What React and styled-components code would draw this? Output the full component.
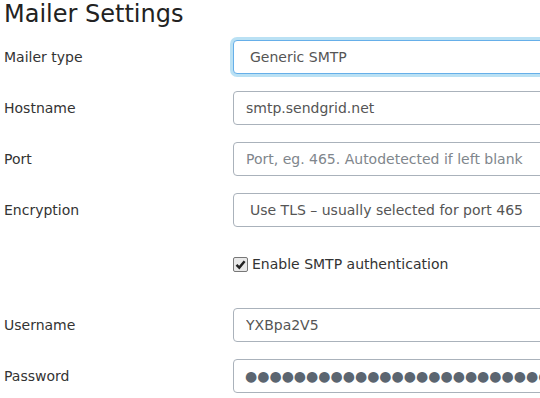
import React from "react";
import styled, { createGlobalStyle } from "styled-components";

const GlobalStyle = createGlobalStyle`
  html, body {
    margin: 0;
    padding: 0;
    background: #fff;
    overflow: hidden;
  }
  body {
    font-family: "DejaVu Sans", "Liberation Sans", sans-serif;
    color: #333;
  }
`;

const Page = styled.div`
  padding: 0 0 0 4px;
  width: 700px;
`;

const Title = styled.h2`
  margin: 0;
  font-size: 24px;
  font-weight: 400;
  line-height: 28px;
  color: #222;
`;

const Form = styled.div`
  display: flex;
  flex-direction: column;
  gap: 17px;
  margin-top: ${(p) => p.$top || 0}px;
`;

const Row = styled.div`
  display: grid;
  grid-template-columns: 229px 420px;
  align-items: center;
  min-height: 34px;
`;

const Label = styled.label`
  font-size: 14px;
  color: #333;
`;

const Input = styled.input`
  box-sizing: border-box;
  height: 34px;
  width: 100%;
  padding: 6px 12px;
  font-family: inherit;
  font-size: 14px;
  color: #555;
  background: #fff;
  border: 1px solid #aab2bb;
  border-radius: 4px;
  outline: none;

  &::placeholder {
    color: #80868c;
  }
`;

const Secret = styled(Input)`
  color: #5b6570;
  padding-left: 11px;
`;

const Select = styled.select`
  box-sizing: border-box;
  height: 34px;
  width: 100%;
  padding: 6px 12px;
  font-family: inherit;
  font-size: 14px;
  color: #555;
  background: #fff;
  border: 1px solid ${(p) => (p.$focused ? "#66afe9" : "#aab2bb")};
  border-radius: 4px;
  outline: none;
  appearance: none;
  box-shadow: ${(p) =>
    p.$focused ? "0 0 0 3px rgba(130, 200, 235, 0.55)" : "none"};
  text-indent: 4px;
`;

const CheckRow = styled.div`
  display: grid;
  grid-template-columns: 229px auto;
  align-items: center;
  height: 20px;
  margin: 27px 0 34px;
`;

const CheckLabel = styled.label`
  display: flex;
  align-items: center;
  gap: 4px;
  font-size: 14px;
  color: #333;
`;

const Box = styled.span`
  width: 13px;
  height: 13px;
  border: 1px solid #777;
  border-radius: 2px;
  background: #e9e9e9;
  display: inline-flex;
  align-items: center;
  justify-content: center;
`;

export default function App() {
  return (
    <>
      <GlobalStyle />
      <Page>
        <Title>Mailer Settings</Title>
        <Form $top={12}>
          <Row>
            <Label>Mailer type</Label>
            <Select $focused defaultValue="smtp">
              <option value="smtp">Generic SMTP</option>
            </Select>
          </Row>
          <Row>
            <Label>Hostname</Label>
            <Input defaultValue="smtp.sendgrid.net" />
          </Row>
          <Row>
            <Label>Port</Label>
            <Input placeholder="Port, eg. 465. Autodetected if left blank" />
          </Row>
          <Row>
            <Label>Encryption</Label>
            <Select defaultValue="tls">
              <option value="tls">Use TLS – usually selected for port 465</option>
            </Select>
          </Row>
        </Form>
        <CheckRow>
          <span />
          <CheckLabel>
            <Box>
              <svg width="11" height="11" viewBox="0 0 11 11">
                <path d="M1.5 5.8 L4.3 8.6 L9.6 2.2" fill="none" stroke="#222" strokeWidth="2.4" />
              </svg>
            </Box>
            Enable SMTP authentication
          </CheckLabel>
        </CheckRow>
        <Form>
          <Row>
            <Label>Username</Label>
            <Input defaultValue="YXBpa2V5" />
          </Row>
          <Row>
            <Label>Password</Label>
            <Secret readOnly value={"●".repeat(36)} />
          </Row>
        </Form>
      </Page>
    </>
  );
}
